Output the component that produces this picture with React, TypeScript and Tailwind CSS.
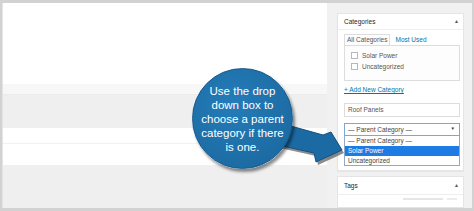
import React from "react";

const font = { fontFamily: '"Liberation Sans", Arial, sans-serif' };

function Panel({ title, children }: { title: string; children?: React.ReactNode }) {
  return (
    <div className="bg-white border border-[#e5e5e5] shadow-[0_1px_1px_rgba(0,0,0,0.04)]">
      <div className="flex items-center justify-between h-[16px] pl-[6px] pr-[4px] border-b border-[#eeeeee]">
        <span className="text-[6.5px] text-[#23282d]">{title}</span>
        <span className="text-[5px] text-[#555] leading-none">▲</span>
      </div>
      {children}
    </div>
  );
}

function Check({ label }: { label: string }) {
  return (
    <div className="flex items-center h-[11px] gap-[4px]">
      <span className="w-[7px] h-[7px] border border-[#b4b9be] bg-white" />
      <span className="text-[6.5px] text-[#555]">{label}</span>
    </div>
  );
}

export default function App() {
  return (
    <div className="relative w-[474px] h-[211px] overflow-hidden bg-[#d2d2d2] pt-[3px] pl-[2px] pr-[2px] pb-[3px] flex" style={font}>
      {/* main editor area */}
      <div className="w-[325px] flex flex-col border-l border-[#e4e4e4]">
        <div className="h-[81px] bg-white" />
        <div className="h-[11px] bg-[#f7f7f7] border-b border-[#ececec]" />
        <div className="h-[33px] bg-[#efefef]" />
        <div className="h-[16px] bg-white border-b border-[#f1f1f1]" />
        <div className="h-[21px] bg-white" />
        <div className="flex-1 bg-[#efefef]" />
      </div>

      {/* sidebar */}
      <div className="flex-1 bg-[#f1f1f1] pt-[10px] pl-[10px] pr-[8px] flex flex-col gap-[5px]">
        <Panel title="Categories">
          <div className="px-[6px] pr-[3px] pt-[4px] pb-[4px]">
            <div className="flex items-end h-[11px] gap-[5px]">
              <div className="h-[11px] px-[2px] border border-b-0 border-[#dddddd] bg-[#fdfdfd] flex items-center">
                <span className="text-[6.5px] text-[#555]">All Categories</span>
              </div>
              <span className="text-[6.5px] text-[#0073aa] h-[11px] flex items-center">Most Used</span>
            </div>
            <div className="h-[36px] border border-[#dddddd] bg-[#fdfdfd] pl-[6px] pt-[4px]">
              <Check label="Solar Power" />
              <Check label="Uncategorized" />
            </div>
            <div className="h-[10px] mt-[4px] flex items-center">
              <span className="text-[6.5px] text-[#0073aa] underline">+ Add New Category</span>
            </div>
            <div className="h-[14px] mt-[8px] border border-[#dddddd] bg-white flex items-center pl-[3px]">
              <span className="text-[6.5px] text-[#555]">Roof Panels</span>
            </div>
            <div className="h-[13px] mt-[6px] border border-[#7aa7d8] bg-white flex items-center justify-between pl-[3px] pr-[4px]">
              <span className="text-[6.5px] text-[#444]">— Parent Category —</span>
              <span className="text-[4.5px] text-[#333] leading-none">▼</span>
            </div>
            <div className="border border-t-0 border-[#8fa9cc] bg-white">
              <div className="h-[10px] flex items-center pl-[3px] text-[6.5px] text-[#444]">— Parent Category —</div>
              <div className="h-[10px] flex items-center pl-[3px] text-[6.5px] text-white bg-[#1e7be4]">Solar Power</div>
              <div className="h-[9px] flex items-center pl-[3px] text-[6.5px] text-[#444]">Uncategorized</div>
            </div>
          </div>
        </Panel>
        <div className="flex-1">
          <div className="bg-white border border-[#e5e5e5] h-full">
            <div className="flex items-center justify-between h-[18px] pl-[6px] pr-[4px] border-b border-[#eeeeee]">
              <span className="text-[6.5px] text-[#23282d]">Tags</span>
              <span className="text-[5px] text-[#555] leading-none">▲</span>
            </div>
            <div className="flex justify-end gap-[4px] pt-[3px] pr-[6px]">
              <span className="w-[40px] h-[2px] bg-[#e6e6e6]" />
              <span className="w-[10px] h-[2px] bg-[#ececec]" />
            </div>
          </div>
        </div>
      </div>

      {/* callout arrow */}
      <svg className="absolute left-0 top-0 pointer-events-none" width="474" height="211" viewBox="0 0 474 211">
        <polygon points="282,127 325,139 333,136 344,153 318,165 316,156 280,148" fill="rgba(0,0,0,0.45)" />
        <polygon points="280,123 323,135 331,132 342,150 316,162 314,153 278,145" fill="#1c6aa3" stroke="#14527f" strokeWidth="1" />
      </svg>

      {/* callout bubble */}
      <div className="absolute left-[192px] top-[68px] w-[101px] h-[101px] rounded-full bg-[radial-gradient(circle_at_40%_35%,#247cb8,#1a659c)] border border-[#165a8b] shadow-[2px_3px_3px_rgba(0,0,0,0.45)] flex items-center justify-center">
        <p className="text-white text-[11.5px] leading-[14px] text-center">
          Use the drop
          <br />
          down box to
          <br />
          choose a parent
          <br />
          category if there
          <br />
          is one.
        </p>
      </div>
    </div>
  );
}
